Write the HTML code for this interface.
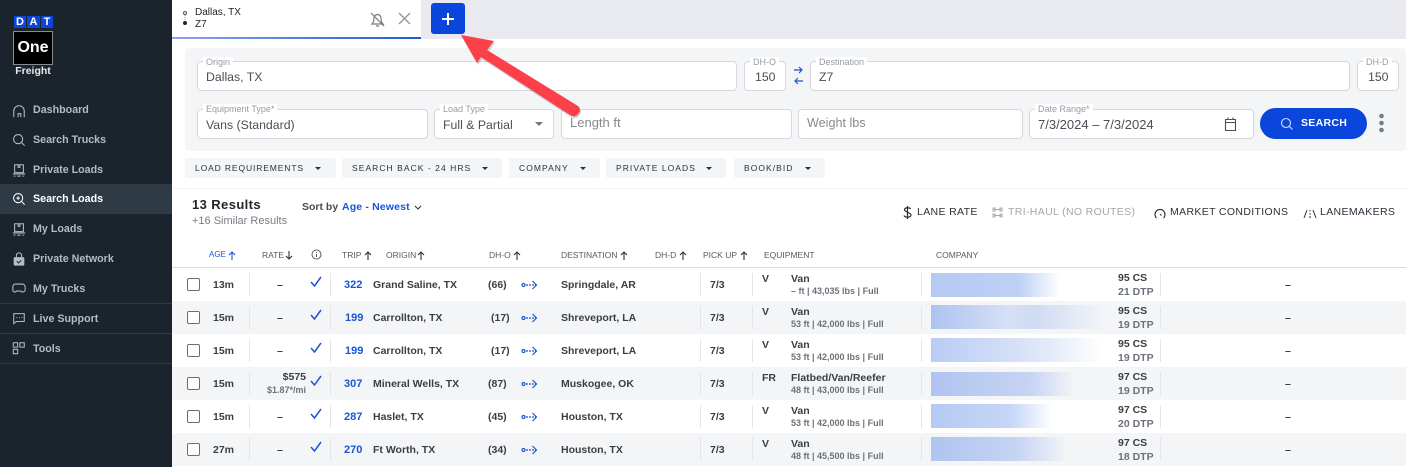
<!DOCTYPE html>
<html><head><meta charset="utf-8">
<style>
*{box-sizing:border-box}
html,body{margin:0;padding:0}
body{width:1406px;height:467px;overflow:hidden;background:#fff;position:relative;font-family:"Liberation Sans",sans-serif;color:#2b3038}
.t{position:absolute;white-space:nowrap}
.side{position:absolute;left:0;top:0;width:172px;height:467px;background:#1b242c}
.nav{position:absolute;left:33px;font-size:10.7px;font-weight:bold;color:#b3bcc6;white-space:nowrap;line-height:14px}
.ic{position:absolute;left:12px;width:14px;height:14px;fill:none;stroke:#b3bcc6;stroke-width:1.2}
.sep{position:absolute;left:0;width:172px;height:1px;background:#2e3a44}
.fld{position:absolute;background:#fff;border:1px solid #d5d8dd;border-radius:4px;height:30px}
.lab{position:absolute;background:#fff;padding:0 3px;font-size:9px;color:#979ba2;line-height:10px;white-space:nowrap}
.val{position:absolute;font-size:12.3px;color:#4a4e55;line-height:16px;white-space:nowrap}
.chip{position:absolute;top:158px;height:20px;background:#f4f5f7;border-radius:2px;font-size:8.5px;letter-spacing:1.05px;color:#2b3038;line-height:20px;padding-left:10px;white-space:nowrap}
.chip i{position:absolute;top:8.5px;width:0;height:0;border:3px solid transparent;border-top:3px solid #2b3038;border-bottom:0}
.hd{position:absolute;top:250px;font-size:8.5px;color:#555b63;line-height:10px;white-space:nowrap}
.ar{position:absolute;top:251px}
.tool{position:absolute;top:206px;font-size:10.5px;letter-spacing:.35px;color:#2b3038;line-height:12px;white-space:nowrap}
.r{position:absolute;left:172px;width:1234px;height:33px}
.g{background:#f4f5f7}
.r span,.r b,.r i,.r svg{position:absolute;white-space:nowrap}
.r b{font-size:10.5px;line-height:13px;color:#3a3e45}
.cb{left:15px;top:10px;width:13px;height:13px;border:1.5px solid #6a6e75;border-radius:2px;background:#fff}
.v{top:5px;width:1px;height:23px;background:#e3e5e8}
.r b.bl{color:#1a55d8;font-size:11px;top:11px}
.r b.sm{font-size:9px;color:#6c727b;line-height:11px}
.r svg{fill:none}
.bg{left:759px;top:4px;width:190px;height:24px}
</style></head>
<body>
<div class="side"></div>
<div style="position:absolute;left:0;top:184px;width:172px;height:30px;background:#2e3a44"></div>
<div class="t" style="left:14px;top:16px;width:12px;height:12px;background:#0b46dc;color:#fff;font:bold 11px/12px 'Liberation Sans',sans-serif;text-align:center">D</div>
<div class="t" style="left:27px;top:16px;width:13px;height:12px;background:#0b46dc;color:#fff;font:bold 11px/12px 'Liberation Sans',sans-serif;text-align:center">A</div>
<div class="t" style="left:41px;top:16px;width:12px;height:12px;background:#0b46dc;color:#fff;font:bold 11px/12px 'Liberation Sans',sans-serif;text-align:center">T</div>
<div class="t" style="left:13px;top:31px;width:40px;height:34px;background:#000;border:1px solid #8a8d90;color:#fff;font:bold 16px/32px 'Liberation Sans',sans-serif;text-align:center">One</div>
<div class="t" style="left:13px;top:65px;width:40px;color:#e8eaec;font:bold 10.5px/13px 'Liberation Sans',sans-serif;text-align:center">Freight</div>

<svg class="ic" style="top:104px" viewBox="0 0 16 16"><path d="M2 15V8a6 6 0 0 1 12 0v7M7 15v-4h3v4"/></svg>
<div class="nav" style="top:103px">Dashboard</div>
<svg class="ic" style="top:133px" viewBox="0 0 16 16"><circle cx="7" cy="7" r="5.2"/><path d="M11 11l3.500 3.500"/></svg>
<div class="nav" style="top:133px">Search Trucks</div>
<svg class="ic" style="top:163px" viewBox="0 0 16 16"><path d="M3 2h10v9H3zM7 2v3h2V2M1 12.500h14M2 15h2M6 15h4M12 15h2"/></svg>
<div class="nav" style="top:163px">Private Loads</div>
<svg class="ic" style="top:192px;stroke:#fff" viewBox="0 0 16 16"><circle cx="7" cy="7" r="5.2"/><path d="M11 11l3.500 3.500M7 5v4M5 7h4"/></svg>
<div class="nav" style="top:192px;color:#fff">Search Loads</div>
<svg class="ic" style="top:222px" viewBox="0 0 16 16"><path d="M3 2h10v9H3zM7 2v3h2V2M1 12.500h14M2 15h2M6 15h4M12 15h2"/></svg>
<div class="nav" style="top:222px">My Loads</div>
<svg class="ic" style="top:252px" viewBox="0 0 16 16"><path d="M5 6V4a3 3 0 0 1 6 0v2"/><rect x="2.500" y="6.500" width="11" height="8.500" rx="1" fill="#b3bcc6"/><path d="M5.500 10.500l2 2 3-3" stroke="#1b242c"/></svg>
<div class="nav" style="top:252px">Private Network</div>
<svg class="ic" style="top:281px" viewBox="0 0 16 16"><path d="M3 3.500h9a3 3 0 0 1 3 3v3a3 3 0 0 1-2 3h-2l-1-1H5l-1 1H3a2 2 0 0 1-2-2V6a3 3 0 0 1 2-2.500z"/></svg>
<div class="nav" style="top:282px">My Trucks</div>
<div class="sep" style="top:303px"></div>
<svg class="ic" style="top:311px" viewBox="0 0 16 16"><path d="M2 3h12v9H5l-3 2.500zM5 7.500h1M8 7.500h1M11 7.500h1"/></svg>
<div class="nav" style="top:312px">Live Support</div>
<div class="sep" style="top:333px"></div>
<svg class="ic" style="top:341px" viewBox="0 0 16 16"><path d="M1.500 2h5v5h-5zM9 2h5v5H9zM1.500 9.500h5v5h-5z"/></svg>
<div class="nav" style="top:342px">Tools</div>
<div class="sep" style="top:363px"></div>

<div class="t" style="left:421px;top:0;width:985px;height:39px;background:#e8eaef"></div>
<div class="t" style="left:172px;top:37px;width:249px;height:2px;background:linear-gradient(90deg,#8aa6e6,#1f5bd8)"></div>
<svg style="position:absolute;left:181px;top:9px" width="8" height="19"><circle cx="4" cy="4" r="1.500" fill="none" stroke="#555" /><path d="M4 6v6" stroke="#888" stroke-dasharray="1 1"/><circle cx="4" cy="14" r="2" fill="#222"/></svg>
<div class="t" style="left:195px;top:6px;font-size:10px;line-height:13px;color:#1e2228">Dallas, TX</div>
<div class="t" style="left:195px;top:18px;font-size:10px;line-height:13px;color:#1e2228">Z7</div>
<svg style="position:absolute;left:369px;top:11px" width="17" height="17" viewBox="0 0 17 17" fill="none" stroke="#777c83" stroke-width="1.200"><path d="M3 13h11c-1.500-1.500-2-3-2-6a3.500 3.500 0 0 0-7 0c0 3-.5 4.500-2 6zM7 15h3M2 2l13 13"/></svg>
<svg style="position:absolute;left:398px;top:12px" width="13" height="13" fill="none" stroke="#8f949b" stroke-width="1.300"><path d="M1 1l11 11M12 1L1 12"/></svg>
<div class="t" style="left:431px;top:3px;width:34px;height:31px;background:#0b46dc;border-radius:3px"></div>
<svg style="position:absolute;left:441px;top:12px" width="14" height="14" stroke="#fff" stroke-width="2"><path d="M7 1v12M1 7h12"/></svg>

<div class="t" style="left:185px;top:48px;width:1221px;height:103px;background:#f4f5f7;border-radius:4px"></div>
<div class="fld" style="left:197px;top:61px;width:540px"></div>
<div class="lab" style="left:203px;top:57px">Origin</div><div class="val" style="left:206px;top:69px">Dallas, TX</div>
<div class="fld" style="left:744px;top:61px;width:42px"></div>
<div class="lab" style="left:750px;top:57px">DH-O</div><div class="val" style="left:755px;top:69px">150</div>
<svg style="position:absolute;left:793px;top:66px" width="12" height="20" fill="none" stroke="#1a55d8" stroke-width="1.200"><path d="M1 4h8M6 1l3 3-3 3M10 15H2M5 12l-3 3 3 3"/></svg>
<div class="fld" style="left:810px;top:61px;width:540px"></div>
<div class="lab" style="left:816px;top:57px">Destination</div><div class="val" style="left:819px;top:69px">Z7</div>
<div class="fld" style="left:1357px;top:61px;width:42px"></div>
<div class="lab" style="left:1363px;top:57px">DH-D</div><div class="val" style="left:1368px;top:69px">150</div>

<div class="fld" style="left:197px;top:109px;width:231px"></div>
<div class="lab" style="left:203px;top:104px">Equipment Type*</div><div class="val" style="left:206px;top:117px">Vans (Standard)</div>
<div class="fld" style="left:434px;top:109px;width:120px"></div>
<div class="lab" style="left:440px;top:104px">Load Type</div><div class="val" style="left:443px;top:117px">Full &amp; Partial</div>
<div class="t" style="left:535px;top:122px;border:4px solid transparent;border-top:4px solid #777;border-bottom:0"></div>
<div class="fld" style="left:561px;top:109px;width:231px"></div>
<div class="val" style="left:570px;top:115px;color:#85898f;font-size:13px">Length ft</div>
<div class="fld" style="left:798px;top:109px;width:225px"></div>
<div class="val" style="left:807px;top:115px;color:#85898f;font-size:12.6px">Weight lbs</div>
<div class="fld" style="left:1029px;top:109px;width:225px"></div>
<div class="lab" style="left:1035px;top:104px">Date Range*</div><div class="val" style="left:1038px;top:117px;font-size:13px">7/3/2024 – 7/3/2024</div>
<svg style="position:absolute;left:1224px;top:117px" width="13" height="15" fill="none" stroke="#4a4e55" stroke-width="1.100"><path d="M1.500 2.500h10v11h-10zM1.500 5.500h10M4 .5v2M9 .5v2"/></svg>
<div class="t" style="left:1260px;top:108px;width:107px;height:31px;background:#0b46dc;border-radius:16px"></div>
<svg style="position:absolute;left:1280px;top:117px" width="13" height="13" fill="none" stroke="#cfdcfb" stroke-width="1.100"><circle cx="6" cy="6" r="4.500"/><path d="M9.500 9.500l3 3"/></svg>
<div class="t" style="left:1301px;top:117px;color:#fff;font-size:10.500px;font-weight:bold;line-height:13px;letter-spacing:.3px">SEARCH</div>
<svg style="position:absolute;left:1378px;top:113px" width="7" height="20" fill="#777c84"><circle cx="3.500" cy="3" r="2.300"/><circle cx="3.500" cy="10" r="2.300"/><circle cx="3.500" cy="17" r="2.300"/></svg>

<div class="chip" style="left:185px;width:151px;letter-spacing:.88px">LOAD REQUIREMENTS<i style="left:130px"></i></div>
<div class="chip" style="left:342px;width:160px">SEARCH BACK - 24 HRS<i style="left:140px"></i></div>
<div class="chip" style="left:509px;width:91px">COMPANY<i style="left:71px"></i></div>
<div class="chip" style="left:606px;width:120px">PRIVATE LOADS<i style="left:100px"></i></div>
<div class="chip" style="left:734px;width:91px">BOOK/BID<i style="left:71px"></i></div>
<div class="t" style="left:172px;top:188px;width:1234px;height:1px;background:#f2f3f5"></div>

<div class="t" style="left:192px;top:197px;font-size:13px;font-weight:bold;line-height:15px;color:#22262c;letter-spacing:.4px">13 Results</div>
<div class="t" style="left:192px;top:215px;font-size:11px;line-height:13px;color:#777c84">+16 Similar Results</div>
<div class="t" style="left:302px;top:201px;font-size:10.500px;font-weight:bold;line-height:13px;color:#474b52">Sort by</div>
<div class="t" style="left:342px;top:201px;font-size:10.500px;font-weight:bold;line-height:13px;color:#1a55d8;letter-spacing:.15px">Age - Newest</div>
<svg style="position:absolute;left:414px;top:205px" width="8" height="6" fill="none" stroke="#333" stroke-width="1.100"><path d="M1 1l3 3 3-3"/></svg>

<svg style="position:absolute;left:903px;top:205px" width="9" height="15" fill="none" stroke="#2b3038" stroke-width="1.200"><path d="M7.500 4C7 2.500 2 2 1.500 4.500S8 7.500 8 10 2 13 1 10.500M4.500 1v13"/></svg>
<div class="tool" style="left:917px">LANE RATE</div>
<svg style="position:absolute;left:992px;top:207px" width="11" height="11" fill="none" stroke="#a8acb2" stroke-width="1.100"><path d="M2 2.500h7M2 8.500h7M1 1h2v3H1zM8 1h2v3H8zM1 7h2v3H1zM8 7h2v3H8z"/></svg>
<div class="tool" style="left:1008px;color:#a2a6ac">TRI-HAUL (NO ROUTES)</div>
<svg style="position:absolute;left:1154px;top:208px" width="12" height="11" fill="none" stroke="#2b3038" stroke-width="1.100"><path d="M2.500 10a5 5 0 1 1 7 0M6 6l1.500 1.500"/></svg>
<div class="tool" style="left:1170px">MARKET CONDITIONS</div>
<svg style="position:absolute;left:1303px;top:209px" width="14" height="9" fill="none" stroke="#2b3038" stroke-width="1"><path d="M1 9l3-8M13 9l-3-8M7 1v1.500M7 4v1.500M7 7v2"/></svg>
<div class="tool" style="left:1320px">LANEMAKERS</div>

<div class="hd" style="left:209px;color:#1a55d8;font-size:8px">AGE</div>
<svg class="ar" style="left:228px" width="8" height="9" fill="none" stroke="#1a55d8" stroke-width="1.100"><path d="M4 9V1M1 4l3-3 3 3"/></svg>
<div class="hd" style="left:262px">RATE</div>
<svg class="ar" style="left:285px" width="8" height="9" fill="none" stroke="#2b3038" stroke-width="1.100"><path d="M4 0v8M1 5l3 3 3-3"/></svg>
<svg style="position:absolute;left:311px;top:249px" width="11" height="11" fill="none" stroke="#555b63"><circle cx="5.500" cy="5.500" r="4.500"/><path d="M5.500 5v3M5.500 3v1"/></svg>
<div class="hd" style="left:342px">TRIP</div>
<svg class="ar" style="left:364px" width="8" height="9" fill="none" stroke="#2b3038" stroke-width="1.100"><path d="M4 9V1M1 4l3-3 3 3"/></svg>
<div class="hd" style="left:386px">ORIGIN</div>
<svg class="ar" style="left:417px" width="8" height="9" fill="none" stroke="#2b3038" stroke-width="1.100"><path d="M4 9V1M1 4l3-3 3 3"/></svg>
<div class="hd" style="left:489px">DH-O</div>
<svg class="ar" style="left:513px" width="8" height="9" fill="none" stroke="#2b3038" stroke-width="1.100"><path d="M4 9V1M1 4l3-3 3 3"/></svg>
<div class="hd" style="left:561px">DESTINATION</div>
<svg class="ar" style="left:620px" width="8" height="9" fill="none" stroke="#2b3038" stroke-width="1.100"><path d="M4 9V1M1 4l3-3 3 3"/></svg>
<div class="hd" style="left:655px">DH-D</div>
<svg class="ar" style="left:679px" width="8" height="9" fill="none" stroke="#2b3038" stroke-width="1.100"><path d="M4 9V1M1 4l3-3 3 3"/></svg>
<div class="hd" style="left:703px">PICK UP</div>
<svg class="ar" style="left:740px" width="8" height="9" fill="none" stroke="#2b3038" stroke-width="1.100"><path d="M4 9V1M1 4l3-3 3 3"/></svg>
<div class="hd" style="left:764px">EQUIPMENT</div>
<div class="hd" style="left:936px">COMPANY</div>
<div class="t" style="left:172px;top:267px;width:1234px;height:1px;background:#d7d9dd"></div>

<!-- rows -->
<div class="r" style="top:268px"><i class="cb"></i><b style="left:41px;top:11px">13m</b><i class="v" style="left:77px"></i><b style="left:105px;top:11px">–</b><svg style="left:138px;top:8px" width="12" height="11" stroke="#1a55d8" stroke-width="1.500"><path d="M1 6l3.500 4L11 1"/></svg><i class="v" style="left:158px"></i><b class="bl" style="left:172px">322</b><b style="left:201px;top:11px">Grand Saline, TX</b><b style="left:316px;top:11px">(66)</b><svg style="left:349px;top:12px" width="17" height="10" stroke="#1a55d8" stroke-width="1.200"><circle cx="2.500" cy="5" r="1.500"/><path d="M5 5h10" stroke-dasharray="2 1"/><path d="M11.500 1l4 4-4 4"/></svg><b style="left:389px;top:11px">Springdale, AR</b><i class="v" style="left:528px"></i><b style="left:538px;top:11px">7/3</b><i class="v" style="left:580px"></i><b style="left:590px;top:5px">V</b><b style="left:619px;top:5px">Van</b><b class="sm" style="left:619px;top:18px">– ft | 43,035 lbs | Full</b><i class="v" style="left:749px"></i><span class="bg" style="top:5px;background:linear-gradient(90deg,#b5c9f3 0,#bed0f5 46%,#fff 68%)"></span><b style="left:946px;top:4px">95 CS</b><b style="left:946px;top:18px;color:#6c727b">21 DTP</b><i class="v" style="left:988px"></i><b style="left:1113px;top:11px">–</b></div>

<div class="r g" style="top:301px"><i class="cb"></i><b style="left:41px;top:11px">15m</b><i class="v" style="left:77px"></i><b style="left:105px;top:11px">–</b><svg style="left:138px;top:8px" width="12" height="11" stroke="#1a55d8" stroke-width="1.500"><path d="M1 6l3.500 4L11 1"/></svg><i class="v" style="left:158px"></i><b class="bl" style="left:173px">199</b><b style="left:201px;top:11px">Carrollton, TX</b><b style="left:319px;top:11px">(17)</b><svg style="left:349px;top:12px" width="17" height="10" stroke="#1a55d8" stroke-width="1.200"><circle cx="2.500" cy="5" r="1.500"/><path d="M5 5h10" stroke-dasharray="2 1"/><path d="M11.500 1l4 4-4 4"/></svg><b style="left:389px;top:11px">Shreveport, LA</b><i class="v" style="left:528px"></i><b style="left:538px;top:11px">7/3</b><i class="v" style="left:580px"></i><b style="left:590px;top:5px">V</b><b style="left:619px;top:5px">Van</b><b class="sm" style="left:619px;top:18px">53 ft | 42,000 lbs | Full</b><i class="v" style="left:749px"></i><span class="bg" style="background:linear-gradient(90deg,#aec3f0 0,#d5dff5 40%,#d0dcf4 55%,#f4f5f7 92%)"></span><b style="left:946px;top:4px">95 CS</b><b style="left:946px;top:18px;color:#6c727b">19 DTP</b><i class="v" style="left:988px"></i><b style="left:1113px;top:11px">–</b></div>

<div class="r" style="top:334px"><i class="cb"></i><b style="left:41px;top:11px">15m</b><i class="v" style="left:77px"></i><b style="left:105px;top:11px">–</b><svg style="left:138px;top:8px" width="12" height="11" stroke="#1a55d8" stroke-width="1.500"><path d="M1 6l3.500 4L11 1"/></svg><i class="v" style="left:158px"></i><b class="bl" style="left:173px">199</b><b style="left:201px;top:11px">Carrollton, TX</b><b style="left:319px;top:11px">(17)</b><svg style="left:349px;top:12px" width="17" height="10" stroke="#1a55d8" stroke-width="1.200"><circle cx="2.500" cy="5" r="1.500"/><path d="M5 5h10" stroke-dasharray="2 1"/><path d="M11.500 1l4 4-4 4"/></svg><b style="left:389px;top:11px">Shreveport, LA</b><i class="v" style="left:528px"></i><b style="left:538px;top:11px">7/3</b><i class="v" style="left:580px"></i><b style="left:590px;top:5px">V</b><b style="left:619px;top:5px">Van</b><b class="sm" style="left:619px;top:18px">53 ft | 42,000 lbs | Full</b><i class="v" style="left:749px"></i><span class="bg" style="background:linear-gradient(90deg,#b9ccf4 0,#d3dff8 42%,#e3eafa 62%,#fff 90%)"></span><b style="left:946px;top:4px">95 CS</b><b style="left:946px;top:18px;color:#6c727b">19 DTP</b><i class="v" style="left:988px"></i><b style="left:1113px;top:11px">–</b></div>

<div class="r g" style="top:367px"><i class="cb"></i><b style="left:41px;top:11px">15m</b><i class="v" style="left:77px"></i><b style="left:134px;top:4px;transform:translateX(-100%)">$575</b><b class="sm" style="left:134px;top:18px;transform:translateX(-100%)">$1.87*/mi</b><svg style="left:138px;top:8px" width="12" height="11" stroke="#1a55d8" stroke-width="1.500"><path d="M1 6l3.500 4L11 1"/></svg><i class="v" style="left:158px"></i><b class="bl" style="left:172px">307</b><b style="left:201px;top:11px">Mineral Wells, TX</b><b style="left:316px;top:11px">(87)</b><svg style="left:349px;top:12px" width="17" height="10" stroke="#1a55d8" stroke-width="1.200"><circle cx="2.500" cy="5" r="1.500"/><path d="M5 5h10" stroke-dasharray="2 1"/><path d="M11.500 1l4 4-4 4"/></svg><b style="left:389px;top:11px">Muskogee, OK</b><i class="v" style="left:528px"></i><b style="left:538px;top:11px">7/3</b><i class="v" style="left:580px"></i><b style="left:590px;top:5px">FR</b><b style="left:619px;top:5px">Flatbed/Van/Reefer</b><b class="sm" style="left:619px;top:18px">48 ft | 43,000 lbs | Full</b><i class="v" style="left:749px"></i><span class="bg" style="top:5px;background:linear-gradient(90deg,#b0c4f0 0,#c6d4f3 52%,#f4f5f7 76%)"></span><b style="left:946px;top:4px">97 CS</b><b style="left:946px;top:18px;color:#6c727b">19 DTP</b><i class="v" style="left:988px"></i><b style="left:1113px;top:11px">–</b></div>

<div class="r" style="top:400px"><i class="cb"></i><b style="left:41px;top:11px">15m</b><i class="v" style="left:77px"></i><b style="left:105px;top:11px">–</b><svg style="left:138px;top:8px" width="12" height="11" stroke="#1a55d8" stroke-width="1.500"><path d="M1 6l3.500 4L11 1"/></svg><i class="v" style="left:158px"></i><b class="bl" style="left:172px">287</b><b style="left:201px;top:11px">Haslet, TX</b><b style="left:316px;top:11px">(45)</b><svg style="left:349px;top:12px" width="17" height="10" stroke="#1a55d8" stroke-width="1.200"><circle cx="2.500" cy="5" r="1.500"/><path d="M5 5h10" stroke-dasharray="2 1"/><path d="M11.500 1l4 4-4 4"/></svg><b style="left:389px;top:11px">Houston, TX</b><i class="v" style="left:528px"></i><b style="left:538px;top:11px">7/3</b><i class="v" style="left:580px"></i><b style="left:590px;top:5px">V</b><b style="left:619px;top:5px">Van</b><b class="sm" style="left:619px;top:18px">53 ft | 42,000 lbs | Full</b><i class="v" style="left:749px"></i><span class="bg" style="background:linear-gradient(90deg,#b5c9f3 0,#c6d6f6 42%,#fff 64%)"></span><b style="left:946px;top:4px">97 CS</b><b style="left:946px;top:18px;color:#6c727b">20 DTP</b><i class="v" style="left:988px"></i><b style="left:1113px;top:11px">–</b></div>

<div class="r g" style="top:433px"><i class="cb"></i><b style="left:41px;top:11px">27m</b><i class="v" style="left:77px"></i><b style="left:105px;top:11px">–</b><svg style="left:138px;top:8px" width="12" height="11" stroke="#1a55d8" stroke-width="1.500"><path d="M1 6l3.500 4L11 1"/></svg><i class="v" style="left:158px"></i><b class="bl" style="left:172px">270</b><b style="left:201px;top:11px">Ft Worth, TX</b><b style="left:316px;top:11px">(34)</b><svg style="left:349px;top:12px" width="17" height="10" stroke="#1a55d8" stroke-width="1.200"><circle cx="2.500" cy="5" r="1.500"/><path d="M5 5h10" stroke-dasharray="2 1"/><path d="M11.500 1l4 4-4 4"/></svg><b style="left:389px;top:11px">Houston, TX</b><i class="v" style="left:528px"></i><b style="left:538px;top:11px">7/3</b><i class="v" style="left:580px"></i><b style="left:590px;top:5px">V</b><b style="left:619px;top:5px">Van</b><b class="sm" style="left:619px;top:18px">48 ft | 45,500 lbs | Full</b><i class="v" style="left:749px"></i><span class="bg" style="background:linear-gradient(90deg,#b0c4f0 0,#c6d4f3 45%,#f4f5f7 72%)"></span><b style="left:946px;top:4px">97 CS</b><b style="left:946px;top:18px;color:#6c727b">18 DTP</b><i class="v" style="left:988px"></i><b style="left:1113px;top:11px">–</b></div>

<!-- red arrow -->
<svg style="position:absolute;left:0;top:0" width="1406" height="467">
<path d="M461 35L494 41L487 50L578 106Q582 110 578 114Q575 118 570 115L481 57L477 63Z" fill="#000" opacity=".18" transform="translate(1,2)"/>
<path d="M461 35L494 41L487 50L578 106Q582 110 578 114Q575 118 570 115L481 57L477 63Z" fill="#fb4049"/>
</svg>
</body></html>
